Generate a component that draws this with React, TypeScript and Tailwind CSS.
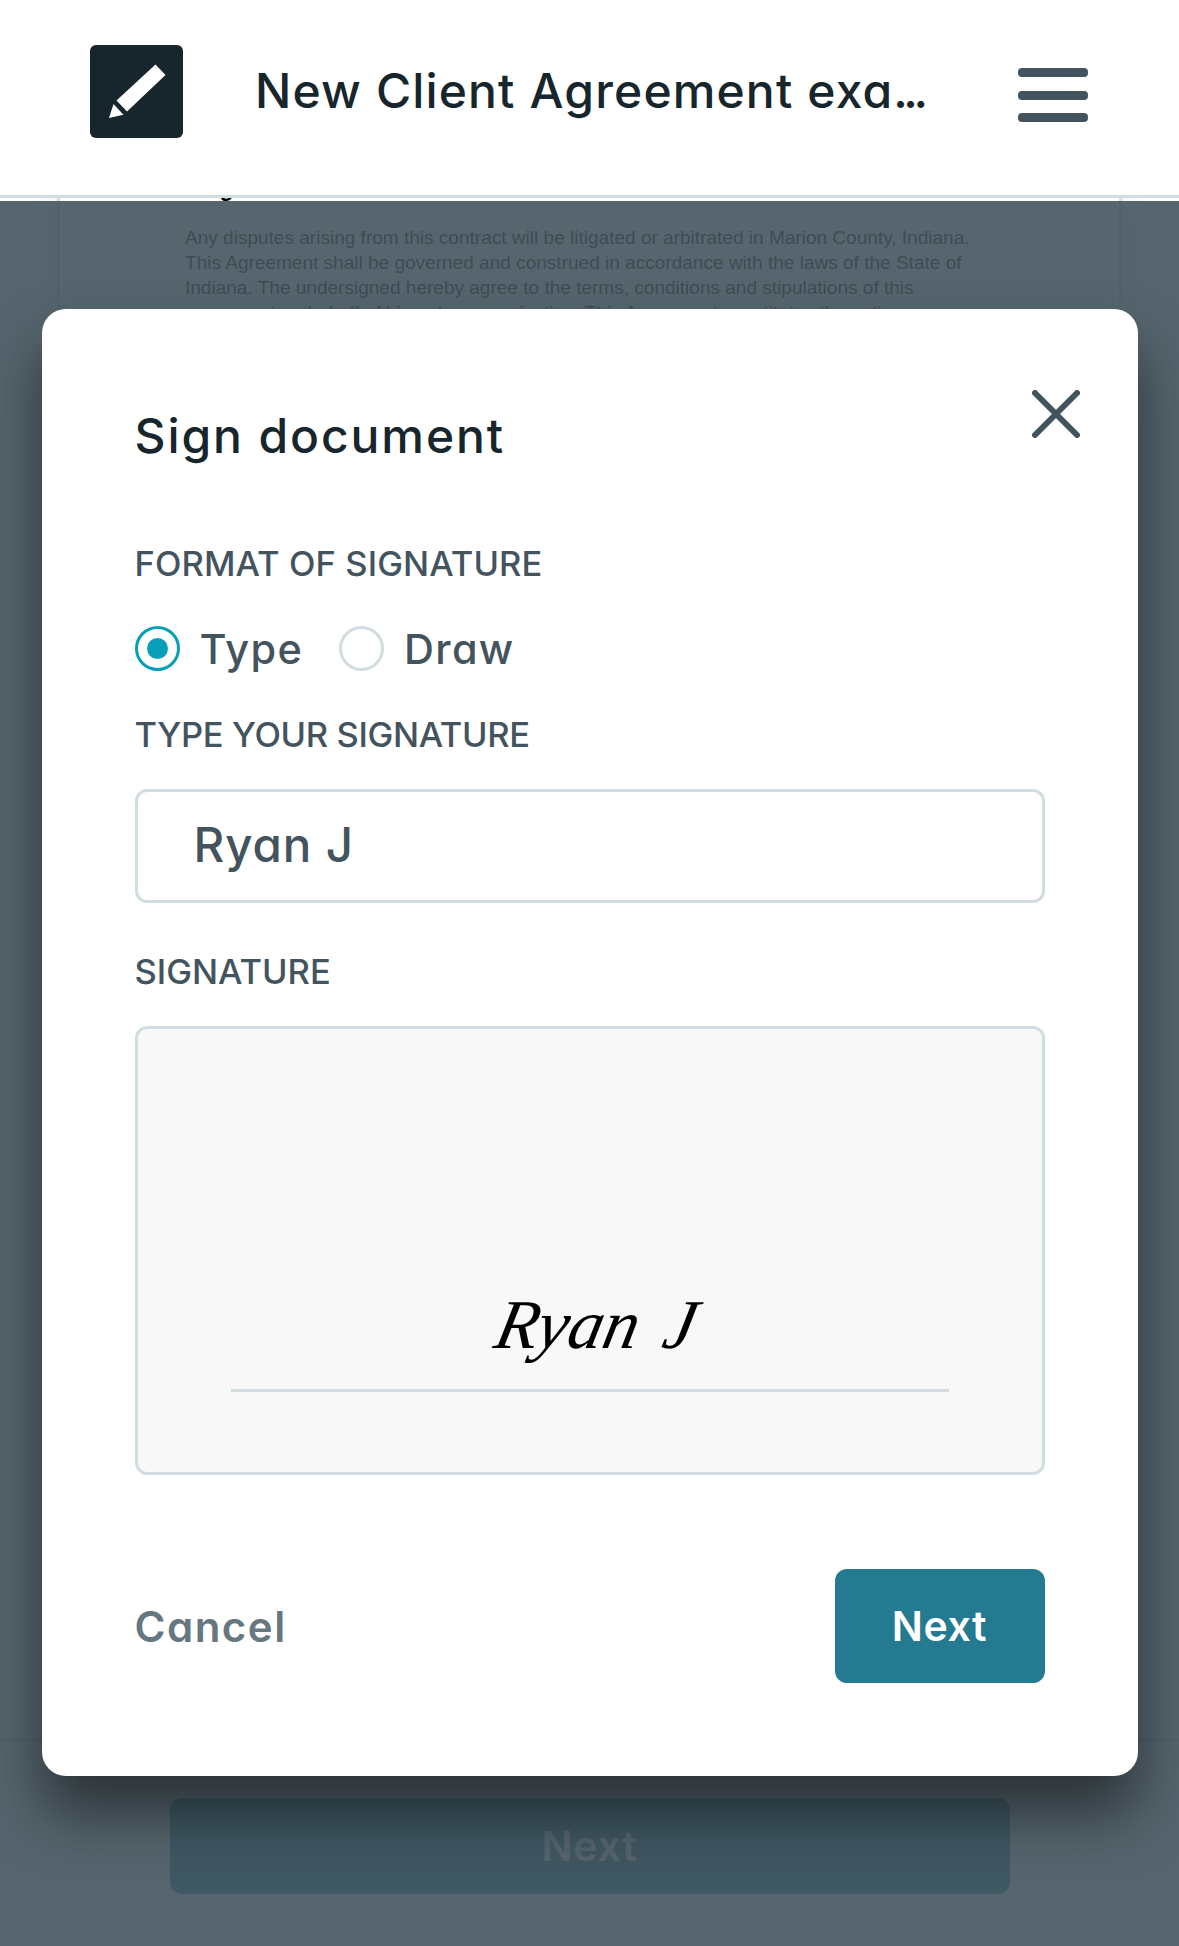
import { useState } from "react";

const labelCls = "text-[34.5px] leading-[48px] font-medium text-[#44545e]";

const CLAUSE_LINES = [
  "Any disputes arising from this contract will be litigated or arbitrated in Marion County, Indiana.",
  "This Agreement shall be governed and construed in accordance with the laws of the State of",
  "Indiana. The undersigned hereby agree to the terms, conditions and stipulations of this",
  "agreement on behalf of his or her organization. This Agreement constitutes the entire",
];

function Logo() {
  return (
    <svg viewBox="0 0 93 93" className="size-[93px] shrink-0">
      <rect width="93" height="93" rx="6" fill="#17252c" />
      <path d="M65.5 19.5 75.5 30 37 66.5 26.5 55.5Z" fill="#fff" />
      <path d="M23.5 59 33.5 69.8 19 73Z" fill="#fff" />
    </svg>
  );
}

function Header() {
  return (
    <header className="relative flex h-[198px] items-start border-b-3 border-[#d2dde1] bg-white pt-[45px] pl-[90px]">
      <Logo />
      <h1 className="ml-[72px] w-[698px] text-[48px] leading-[91px] font-medium tracking-[1.15px] whitespace-nowrap text-[#17252c]">
        New Client Agreement exa<span className="tracking-[-4.5px]">...</span>
      </h1>
      <button className="mt-[23px] ml-[65px] flex flex-col gap-[13.5px]" aria-label="Menu">
        <span className="h-[9px] w-[70px] rounded-[4px] bg-[#44545e]" />
        <span className="h-[9px] w-[70px] rounded-[4px] bg-[#44545e]" />
        <span className="h-[9px] w-[70px] rounded-[4px] bg-[#44545e]" />
      </button>
    </header>
  );
}

function DocumentPage() {
  return (
    <div className="flex h-[1540px] justify-center">
      <div className="h-[1540px] w-[1065px] border-x-3 border-[#d2dde1] bg-white px-[125px] font-['Liberation_Sans',sans-serif] text-black shadow-[0_0_40px_rgba(0,0,0,0.15)]">
        <h2 className="-mt-[22px] h-[49px] text-[23px] leading-[24px] font-bold">Litigation</h2>
        {CLAUSE_LINES.map((line) => (
          <p key={line} className="text-[19.05px] leading-[25px] whitespace-nowrap">{line}</p>
        ))}
      </div>
    </div>
  );
}

interface RadioProps {
  label: string;
  checked: boolean;
  onSelect: () => void;
}

function Radio({ label, checked, onSelect }: RadioProps) {
  return (
    <button onClick={onSelect} role="radio" aria-checked={checked} className="flex items-center gap-[20px]">
      <span className={`flex size-[45px] items-center justify-center rounded-full border-3 ${checked ? "border-[#079fb8]" : "border-[#d2dde1]"}`}>
        {checked && <span className="size-[21px] rounded-full bg-[#079fb8]" />}
      </span>
      <span className="text-[41.5px] leading-[48px] font-medium tracking-[1.3px] text-[#44545e]">{label}</span>
    </button>
  );
}

function SignModal() {
  const [format, setFormat] = useState("type");
  const [name, setName] = useState("Ryan J");

  return (
    <div className="relative h-[1467px] w-[1096px] rounded-[24px] bg-white px-[93px] pt-[97px] shadow-[0_38px_60px_rgba(0,0,0,0.5)]">
      <button className="absolute top-[81px] right-[58px]" aria-label="Close">
        <svg viewBox="0 0 48 48" className="size-[48px]" stroke="#44545e" strokeWidth="6" strokeLinecap="round">
          <path d="M3 3 45 45M45 3 3 45" />
        </svg>
      </button>

      <h2 className="text-[48px] leading-[60px] font-medium tracking-[1.9px] text-[#17252c]">Sign document</h2>

      <div className={`mt-[74px] tracking-[0.1px] ${labelCls}`}>FORMAT OF SIGNATURE</div>
      <div role="radiogroup" className="mt-[37px] flex gap-[36px]">
        <Radio label="Type" checked={format === "type"} onSelect={() => setFormat("type")} />
        <Radio label="Draw" checked={format === "draw"} onSelect={() => setFormat("draw")} />
      </div>

      <div className={`mt-[38px] tracking-[-0.35px] ${labelCls}`}>TYPE YOUR SIGNATURE</div>
      <input value={name} onChange={(e) => setName(e.target.value)}
        className="mt-[30px] block h-[114px] w-[910px] rounded-[12px] border-3 border-[#d2dde1] px-[56px] pb-[2px] text-[47.5px] font-medium tracking-[0.9px] text-[#44545e] outline-none" />

      <div className={`mt-[45px] ${labelCls}`}>SIGNATURE</div>
      <div className="mt-[30px] flex h-[449px] w-[910px] flex-col justify-end rounded-[12px] border-3 border-[#d2dde1] bg-[#f8f8f8] px-[93px] pb-[80px]">
        <div className="border-b-3 border-[#d2dde1] pb-[20px] pl-[14px] text-center font-['Liberation_Serif',serif] text-[70px] leading-[88px] [word-spacing:8px] text-black italic">
          <span className="inline-block -skew-x-12">{name}</span>
        </div>
      </div>

      <div className="mt-[94px] flex h-[114px] w-[910px] items-center justify-between">
        <button className="pt-[1px] text-[42px] font-semibold tracking-[1.5px] text-[#677780]">Cancel</button>
        <button className="h-full w-[210px] rounded-[12px] bg-[#237a91] pt-[2px] text-[41px] font-semibold tracking-[0.6px] text-white">Next</button>
      </div>
    </div>
  );
}

export default function App() {
  return (
    <div className="relative h-[1946px] w-[1179px] overflow-hidden bg-white font-['Inter',sans-serif] [font-feature-settings:'cv11']">
      <Header />
      <DocumentPage />
      <footer className="relative flex h-[208px] justify-center border-t-3 border-[#d2dde1] bg-white pt-[57px]">
        <button className="h-[96px] w-[840px] rounded-[12px] bg-[#237a91] pt-[2px] text-[41px] font-semibold tracking-[0.8px] text-white">Next</button>
      </footer>
      <div className="absolute inset-x-0 top-[201px] bottom-0 flex items-start justify-center overflow-hidden bg-[#44545e]/90 pt-[107.5px]">
        <SignModal />
      </div>
    </div>
  );
}
